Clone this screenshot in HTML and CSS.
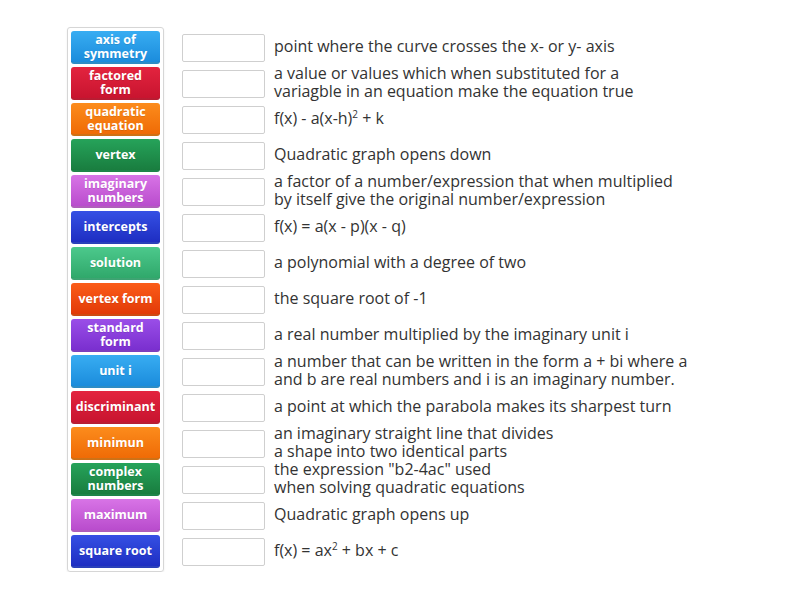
FILE: index.html
```html
<!DOCTYPE html>
<html>
<head>
<meta charset="utf-8">
<link rel="stylesheet" href="styles.css">
</head>
<body>
<div class="game">
  <div class="bank">
    <div class="tile blue">axis of<br>symmetry</div>
    <div class="tile red">factored<br>form</div>
    <div class="tile orange">quadratic<br>equation</div>
    <div class="tile green">vertex</div>
    <div class="tile pink">imaginary<br>numbers</div>
    <div class="tile navy">intercepts</div>
    <div class="tile teal">solution</div>
    <div class="tile vermilion">vertex form</div>
    <div class="tile purple">standard<br>form</div>
    <div class="tile blue">unit i</div>
    <div class="tile red">discriminant</div>
    <div class="tile orange">minimun</div>
    <div class="tile green">complex<br>numbers</div>
    <div class="tile pink">maximum</div>
    <div class="tile navy">square root</div>
  </div>
  <div class="rows">
    <div class="row"><div class="slot"></div><div class="def">point where the curve crosses the x- or y- axis</div></div>
    <div class="row"><div class="slot"></div><div class="def">a value or values which when substituted for a<br>variagble in an equation make the equation true</div></div>
    <div class="row"><div class="slot"></div><div class="def">f(x) - a(x-h)<sup>2</sup> + k</div></div>
    <div class="row"><div class="slot"></div><div class="def">Quadratic graph opens down</div></div>
    <div class="row"><div class="slot"></div><div class="def">a factor of a number/expression that when multiplied<br>by itself give the original number/expression</div></div>
    <div class="row"><div class="slot"></div><div class="def">f(x) = a(x - p)(x - q)</div></div>
    <div class="row"><div class="slot"></div><div class="def">a polynomial with a degree of two</div></div>
    <div class="row"><div class="slot"></div><div class="def">the square root of -1</div></div>
    <div class="row"><div class="slot"></div><div class="def">a real number multiplied by the imaginary unit i</div></div>
    <div class="row"><div class="slot"></div><div class="def">a number that can be written in the form a + bi where a<br>and b are real numbers and i is an imaginary number.</div></div>
    <div class="row"><div class="slot"></div><div class="def">a point at which the parabola makes its sharpest turn</div></div>
    <div class="row"><div class="slot"></div><div class="def">an imaginary straight line that divides<br>a shape into two identical parts</div></div>
    <div class="row"><div class="slot"></div><div class="def">the expression "b2-4ac" used<br>when solving quadratic equations</div></div>
    <div class="row"><div class="slot"></div><div class="def">Quadratic graph opens up</div></div>
    <div class="row"><div class="slot"></div><div class="def">f(x) = ax<sup>2</sup> + bx + c</div></div>
  </div>
</div>
</body>
</html>
```
FILE: styles.css
```css
html, body {
  margin: 0;
  padding: 0;
  background: #fff;
}
body {
  font-family: "Open Sans", "Liberation Sans", sans-serif;
}
.game {
  display: flex;
  align-items: flex-start;
  padding: 27px 0 0 67px;
}
.bank {
  display: flex;
  flex-direction: column;
  gap: 3px;
  padding: 3px;
  border: 1px solid #d6d6d6;
  border-radius: 3px;
  box-shadow: 0 1px 2px rgba(0,0,0,0.08);
}
.tile {
  width: 89px;
  height: 33px;
  box-sizing: border-box;
  border-radius: 3px;
  display: flex;
  align-items: center;
  justify-content: center;
  text-align: center;
  color: #fff;
  font-weight: 700;
  font-size: 12.5px;
  line-height: 14px;
  border-bottom: 2px solid rgba(0,0,0,0.18);
  text-shadow: 0 1px 0 rgba(0,0,0,0.1);
}
.blue { background: linear-gradient(#38adf2, #1b8cdc); }
.red { background: linear-gradient(#e3243f, #c8142f); }
.orange { background: linear-gradient(#fc8c1c, #ef6b06); }
.green { background: linear-gradient(#26a35a, #197d3f); }
.pink { background: linear-gradient(#d874e6, #b94ccd); }
.navy { background: linear-gradient(#3550e4, #1e2ec2); }
.teal { background: linear-gradient(#4cc98c, #30a86b); }
.vermilion { background: linear-gradient(#fb5c18, #e23a08); }
.purple { background: linear-gradient(#9a4ee8, #7a2fcf); }
.rows {
  display: flex;
  flex-direction: column;
  gap: 3px;
  padding-top: 4px;
  margin-left: 18px;
}
.row {
  height: 33px;
  display: flex;
  align-items: center;
}
.slot {
  width: 83px;
  height: 28px;
  box-sizing: border-box;
  border: 1px solid #cfcfcf;
  border-radius: 2px;
  background: #fff;
  flex: none;
}
.def {
  margin-left: 9px;
  padding-bottom: 3px;
  font-size: 16px;
  line-height: 18px;
  color: #333;
  white-space: nowrap;
}
.def sup {
  font-size: 10px;
  line-height: 0;
  vertical-align: 6px;
}
```
